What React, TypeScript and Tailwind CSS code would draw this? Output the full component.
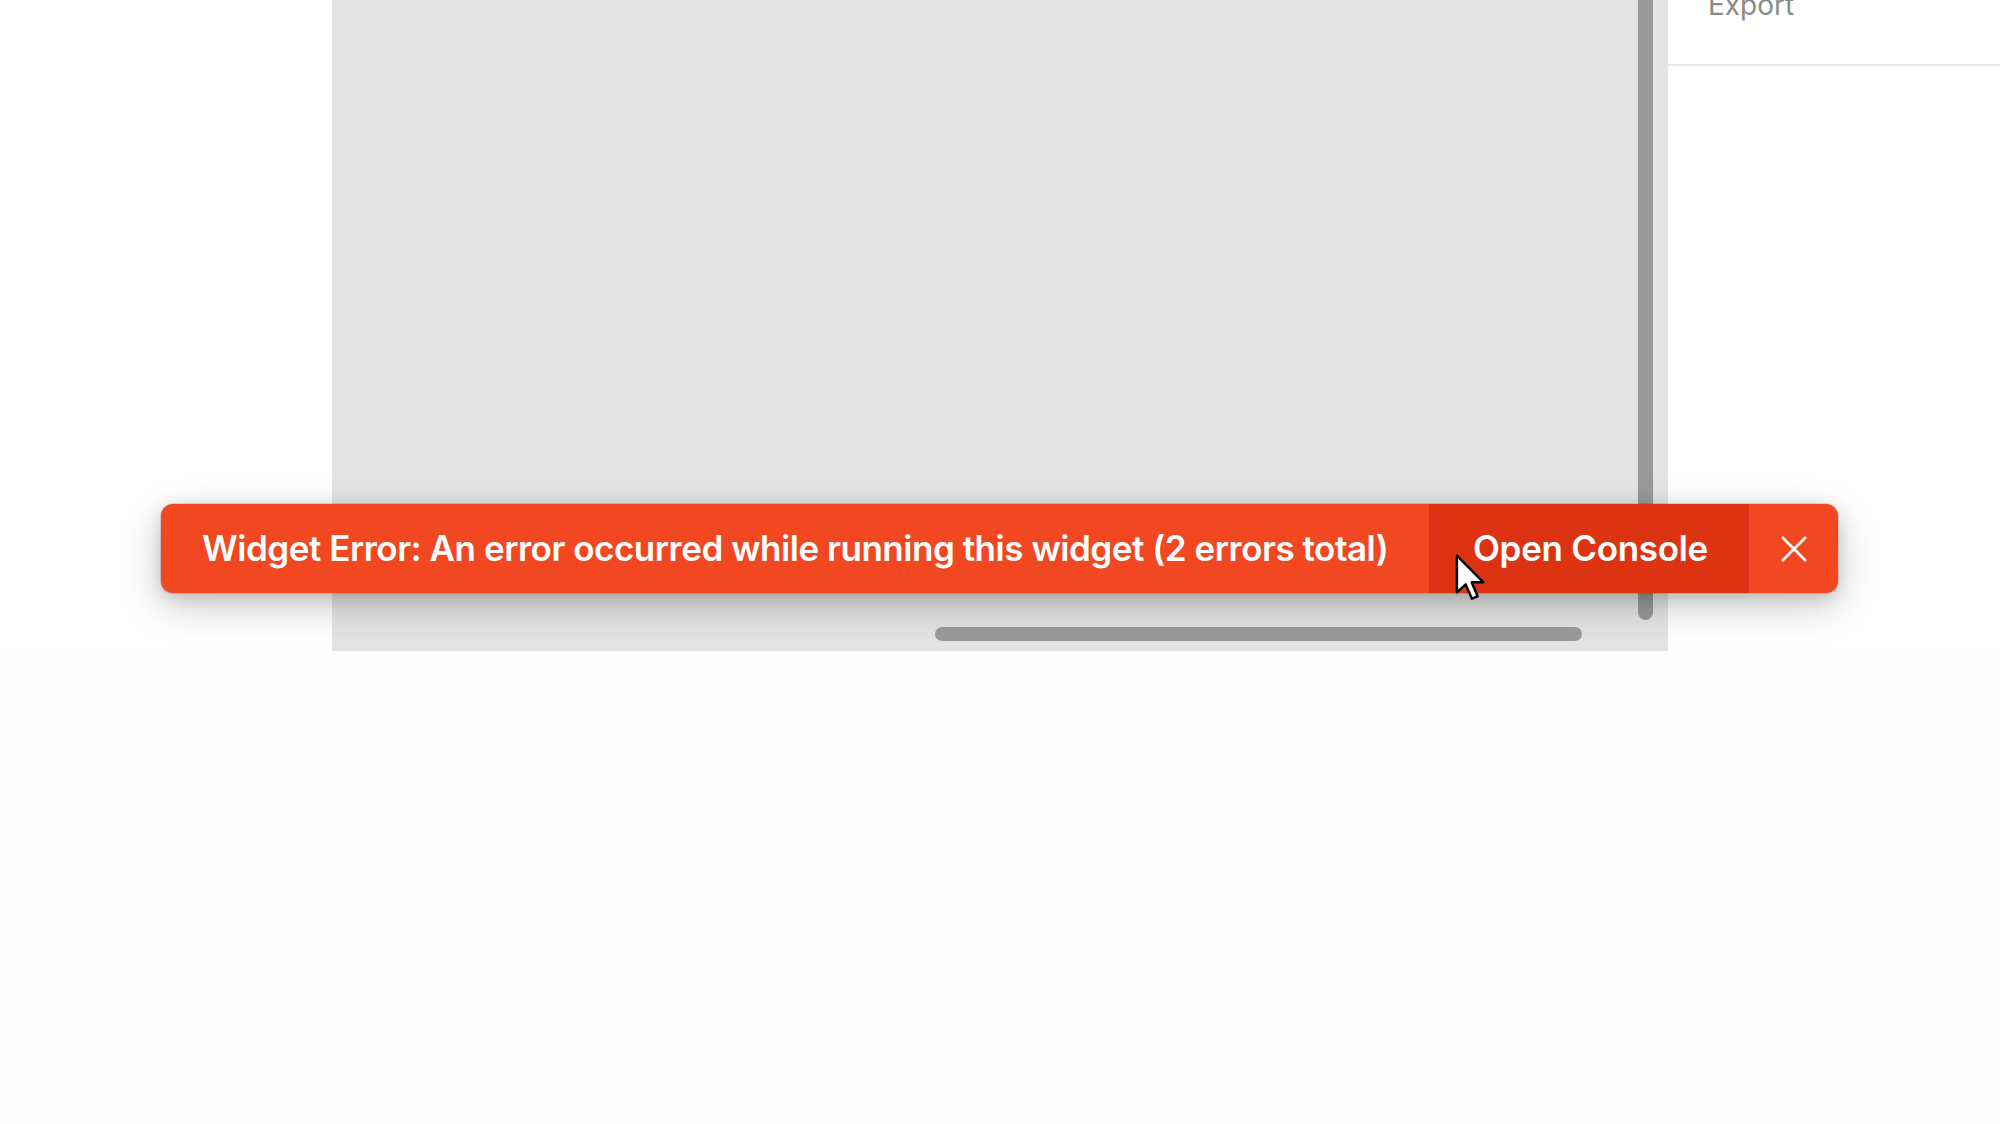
import React from "react";

function Cursor() {
  return (
    <svg
      className="absolute left-[1453px] top-[552px]"
      width="34"
      height="50"
      viewBox="0 0 14 21"
    >
      <path
        d="M1.5 1.5 L1.5 17 L5.2 13.6 L7.8 19.6 L10.2 18.6 L7.7 12.7 L12.6 12.7 Z"
        fill="#ffffff"
        stroke="#000000"
        strokeWidth="1"
        strokeLinejoin="round"
      />
    </svg>
  );
}

export default function App() {
  return (
    <div
      className="relative w-[2000px] h-[1124px] bg-[#fefefe] overflow-hidden"
      style={{ fontFamily: "Inter, 'Liberation Sans', sans-serif" }}
    >
      <div className="flex h-[651px]">
        <div className="w-[332px] bg-white" />
        <div className="relative w-[1336px] bg-[#e4e4e4]">
          <div className="absolute left-[1306px] top-0 w-[15px] h-[620px] rounded-b-full bg-[#9a9a9a]" />
          <div className="absolute left-[603px] top-[627px] w-[647px] h-[14px] rounded-full bg-[#9a9a9a]" />
        </div>
        <div className="w-[332px] bg-white flex flex-col">
          <div className="h-[66px] pl-[40px] border-b-2 border-[#e8e8e8]">
            <div className="mt-[-13px] text-[28px] leading-[36px] text-[#8a8a8a]">Export</div>
          </div>
        </div>
      </div>

      <div className="absolute left-[161px] top-[504px] w-[1677px] h-[89px] flex rounded-[12px] bg-[#f24822] overflow-hidden shadow-[0_0_0_1px_rgba(0,0,0,0.12),0_5px_18px_rgba(0,0,0,0.15),0_13px_44px_rgba(0,0,0,0.2)]">
        <div className="flex-1 flex items-center pl-[41px] text-white text-[35px] font-semibold tracking-[-0.47px] whitespace-nowrap">
          Widget Error: An error occurred while running this widget (2 errors total)
        </div>
        <div className="w-[320px] flex items-center pl-[44px] bg-[#dc3412] text-white text-[35px] font-semibold tracking-[-0.3px] whitespace-nowrap">
          Open Console
        </div>
        <div className="w-[89px] flex items-center justify-center">
          <svg width="28" height="28" viewBox="0 0 28 28">
            <path d="M2 2 L26 26 M26 2 L2 26" stroke="#ffffff" strokeWidth="2.6" />
          </svg>
        </div>
      </div>

      <Cursor />
    </div>
  );
}
